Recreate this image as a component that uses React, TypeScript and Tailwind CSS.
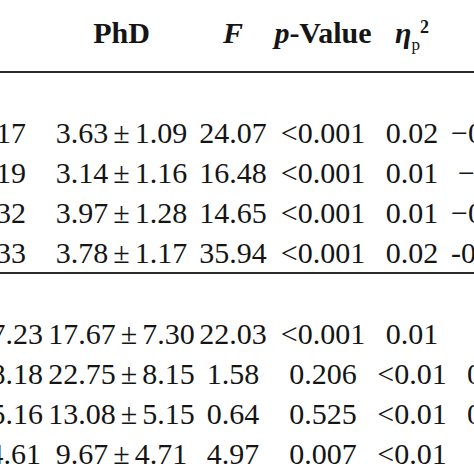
import React from "react";

type Row = {
  c1: string;
  c1pr: string;
  m: string;
  sd: string;
  f: string;
  p: string;
  e: string;
  last: string;
  lastPl: string;
};

const upper: Row[] = [
  { c1: "3.41 ± 1.17", c1pr: "pr-[22px]", m: "3.63", sd: "1.09", f: "24.07", p: "<0.001", e: "0.02", last: "−0.07", lastPl: "pl-[2px]" },
  { c1: "2.96 ± 1.19", c1pr: "pr-[22px]", m: "3.14", sd: "1.16", f: "16.48", p: "<0.001", e: "0.01", last: "−0.05", lastPl: "pl-[9px]" },
  { c1: "3.77 ± 1.32", c1pr: "pr-[22px]", m: "3.97", sd: "1.28", f: "14.65", p: "<0.001", e: "0.01", last: "−0.04", lastPl: "pl-[2px]" },
  { c1: "3.52 ± 1.33", c1pr: "pr-[22px]", m: "3.78", sd: "1.17", f: "35.94", p: "<0.001", e: "0.02", last: "-0.06", lastPl: "pl-[2px]" },
];

const lower: Row[] = [
  { c1: "15.92 ± 7.23", c1pr: "pr-[5px]", m: "17.67", sd: "7.30", f: "22.03", p: "<0.001", e: "0.01", last: "", lastPl: "pl-[18px]" },
  { c1: "22.10 ± 8.18", c1pr: "pr-[5px]", m: "22.75", sd: "8.15", f: "1.58", p: "0.206", e: "<0.01", last: "0.02", lastPl: "pl-[18px]" },
  { c1: "12.71 ± 5.16", c1pr: "pr-[5px]", m: "13.08", sd: "5.15", f: "0.64", p: "0.525", e: "<0.01", last: "0.01", lastPl: "pl-[18px]" },
  { c1: "8.84 ± 4.61", c1pr: "pr-[7px]", m: "9.67", sd: "4.71", f: "4.97", p: "0.007", e: "<0.01", last: "", lastPl: "pl-[18px]" },
];

const grid = "grid grid-cols-[48px_147px_76px_104px_74px_1fr] h-[40px] items-start";

function DataRow({ r }: { r: Row }) {
  return (
    <div className={grid}>
      <div className={`flex justify-end whitespace-nowrap ${r.c1pr}`}>
        <span className="shrink-0">{r.c1}</span>
      </div>
      <div className="flex justify-center whitespace-nowrap">
        <span className="shrink-0">
          {r.m}
          <span className="mx-[5px]">±</span>
          {r.sd}
        </span>
      </div>
      <div className="flex justify-center whitespace-nowrap">
        <span className="shrink-0">{r.f}</span>
      </div>
      <div className="flex justify-center whitespace-nowrap">
        <span className="shrink-0">{r.p}</span>
      </div>
      <div className="flex justify-center whitespace-nowrap">
        <span className="shrink-0">{r.e}</span>
      </div>
      <div className={`whitespace-nowrap ${r.lastPl}`}>{r.last}</div>
    </div>
  );
}

export default function App() {
  return (
    <div className="w-[474px] h-[474px] overflow-hidden bg-white text-[#151515] font-['Liberation_Serif','Times_New_Roman',serif] text-[30px] leading-[40px]">
      <div className={`${grid} mt-[13px] font-bold`}>
        <div />
        <div className="flex justify-center">PhD</div>
        <div className="flex justify-center italic">F</div>
        <div className="flex justify-center whitespace-nowrap">
          <span className="italic">p</span>-Value
        </div>
        <div className="flex justify-center whitespace-nowrap">
          <span className="italic">η</span>
          <span className="text-[17px] font-normal relative top-[12px]">p</span>
          <span className="text-[18px] relative top-[-6px]">2</span>
        </div>
        <div />
      </div>
      <div className="mt-[18px] h-[2px] bg-[#2b2b2b]" />
      <div className="h-[40px]" />
      {upper.map((r, i) => (
        <DataRow key={i} r={r} />
      ))}
      <div className="h-[2px] bg-[#2b2b2b] -mt-[1px]" />
      <div className="h-[40px]" />
      {lower.map((r, i) => (
        <DataRow key={i} r={r} />
      ))}
    </div>
  );
}
